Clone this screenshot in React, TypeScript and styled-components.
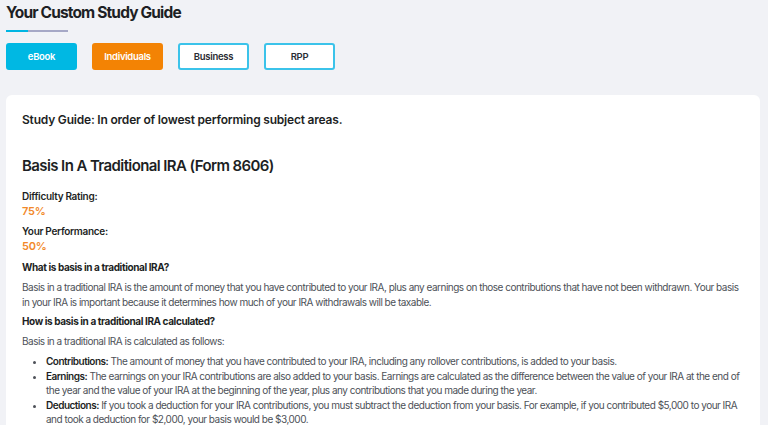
import styled, { createGlobalStyle } from "styled-components";

const GlobalStyle = createGlobalStyle`
  html, body {
    margin: 0;
    padding: 0;
    background: #f1f2f6;
    font-family: Inter, "Liberation Sans", sans-serif;
    color: #1d1f24;
  }
`;

const Page = styled.div`
  padding: 3px 8px 0 6px;
`;

const Title = styled.h1`
  margin: 0;
  font-size: 15.5px;
  font-weight: 700;
  line-height: 20px;
  letter-spacing: -0.85px;
`;

const Underline = styled.div`
  margin-top: 7px;
  width: 62px;
  height: 2px;
  background: linear-gradient(to right, #00b5e2 0 22px, #a6a8c6 22px 100%);
`;

const Tabs = styled.div`
  display: flex;
  gap: 15px;
  margin-top: 11px;
`;

const Tab = styled.button<{ $variant: "blue" | "orange" | "outline" }>`
  width: 71px;
  height: 27px;
  padding: 0;
  border-radius: 3px;
  font-family: Inter, "Liberation Sans", sans-serif;
  font-size: 9.5px;
  letter-spacing: -0.3px;
  font-weight: 600;
  cursor: pointer;
  border: 2px solid
    ${(p) =>
      p.$variant === "blue" ? "#00b8e3" : p.$variant === "orange" ? "#f38304" : "#3bc3ea"};
  background: ${(p) =>
    p.$variant === "blue" ? "#00b8e3" : p.$variant === "orange" ? "#f38304" : "#fff"};
  color: ${(p) => (p.$variant === "outline" ? "#2a2c33" : "#fff")};
`;

const Card = styled.div`
  margin-top: 25px;
  background: #fff;
  border-radius: 6px;
  padding: 17px 16px 20px 16px;
`;

const Lead = styled.h2`
  margin: 0;
  font-size: 12px;
  font-weight: 600;
  line-height: 16px;
  letter-spacing: -0.2px;
`;

const Heading = styled.h3`
  margin: 28px 0 0;
  font-size: 15px;
  font-weight: 600;
  line-height: 20px;
  letter-spacing: -0.6px;
`;

const Label = styled.div<{ $top?: number }>`
  margin-top: ${(p) => p.$top ?? 5}px;
  font-size: 10px;
  font-weight: 600;
  line-height: 14px;
  letter-spacing: -0.3px;
`;

const Score = styled.div`
  font-size: 11px;
  font-weight: 600;
  color: #f2892a;
  line-height: 16px;
  letter-spacing: -0.2px;
`;

const Question = styled.div<{ $top?: number }>`
  margin-top: ${(p) => p.$top ?? 6}px;
  font-size: 10px;
  font-weight: 700;
  line-height: 14px;
  letter-spacing: -0.4px;
`;

const Para = styled.p`
  margin: 6px 0 0;
  font-size: 10px;
  line-height: 14.5px;
  letter-spacing: -0.5px;
  color: #4d5158;
`;

const List = styled.ul`
  margin: 5.5px 0 0;
  padding-left: 24px;
  font-size: 10px;
  line-height: 14.5px;
  letter-spacing: -0.5px;
  color: #4d5158;

  b {
    color: #1d1f24;
    font-weight: 600;
  }
`;

export default function App() {
  return (
    <>
      <GlobalStyle />
      <Page>
        <Title>Your Custom Study Guide</Title>
        <Underline />
        <Tabs>
          <Tab $variant="blue">eBook</Tab>
          <Tab $variant="orange">Individuals</Tab>
          <Tab $variant="outline">Business</Tab>
          <Tab $variant="outline">RPP</Tab>
        </Tabs>
        <Card>
          <Lead>Study Guide: In order of lowest performing subject areas.</Lead>
          <Heading>Basis In A Traditional IRA (Form 8606)</Heading>
          <Label $top={13}>Difficulty Rating:</Label>
          <Score>75%</Score>
          <Label>Your Performance:</Label>
          <Score>50%</Score>
          <Question>What is basis in a traditional IRA?</Question>
          <Para>
            Basis in a traditional IRA is the amount of money that you have contributed to your
            IRA, plus any earnings on those contributions that have not been withdrawn. Your basis
            in your IRA is important because it determines how much of your IRA withdrawals will be
            taxable.
          </Para>
          <Question $top={5}>How is basis in a traditional IRA calculated?</Question>
          <Para>Basis in a traditional IRA is calculated as follows:</Para>
          <List>
            <li>
              <b>Contributions:</b> The amount of money that you have contributed to your IRA,
              including any rollover contributions, is added to your basis.
            </li>
            <li>
              <b>Earnings:</b> The earnings on your IRA contributions are also added to your basis.
              Earnings are calculated as the difference between the value of your IRA at the end of
              the year and the value of your IRA at the beginning of the year, plus any contributions
              that you made during the year.
            </li>
            <li>
              <b>Deductions:</b> If you took a deduction for your IRA contributions, you must
              subtract the deduction from your basis. For example, if you contributed $5,000 to your
              IRA and took a deduction for $2,000, your basis would be $3,000.
            </li>
          </List>
        </Card>
      </Page>
    </>
  );
}
